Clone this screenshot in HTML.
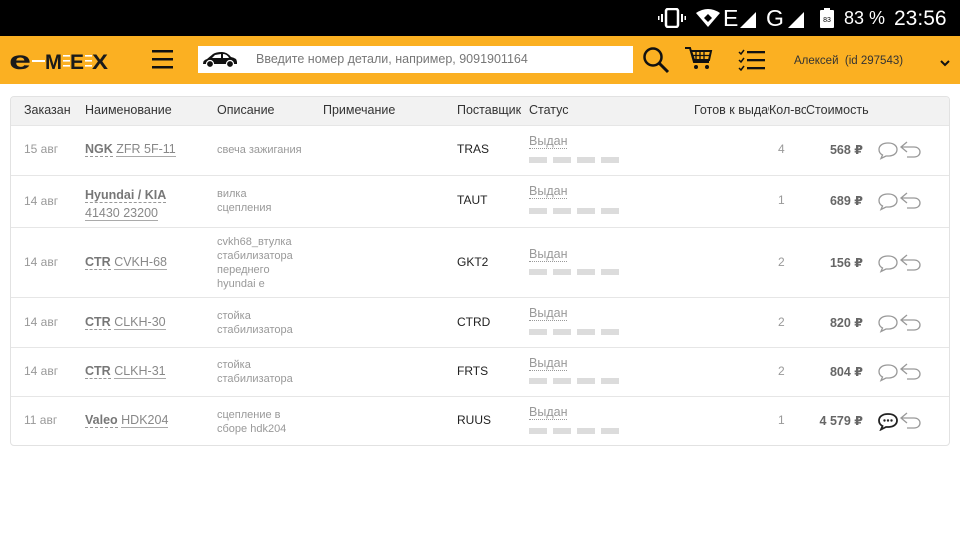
<!DOCTYPE html>
<html><head><meta charset="utf-8"><style>
*{margin:0;padding:0;box-sizing:border-box}
body{width:960px;height:540px;background:#fff;font-family:"Liberation Sans","DejaVu Sans",sans-serif;position:relative;overflow:hidden}
.a{position:absolute;white-space:nowrap}
.sb{top:0;left:0;width:960px;height:36px;background:#000;color:#fff}
.top{top:36px;left:0;width:960px;height:48px;background:#fbb022}
.tbl{top:96px;left:10px;width:940px;height:350px;border:1px solid #e2e2e2;border-radius:4px;overflow:hidden}
.hd{top:0;left:0;width:940px;height:29px;background:#f2f2f2}
.h{font-size:12.5px;color:#333;top:6px}
.row{left:0;width:940px;border-top:1px solid #e6e6e6}
.d{font-size:12px;color:#999;margin-top:-1px}
.nm{font-size:12.5px;color:#888;margin-top:-1px}
.nm b{color:#777;border-bottom:1px dashed #999}
.nm span{border-bottom:1px solid #aaa}
.ds{font-size:11px;color:#999;line-height:14px;margin-top:-1px}
.sp{font-size:12px;color:#222;margin-top:-1px}
.st{font-size:12.5px;color:#999;border-bottom:1px dotted #999;line-height:14px;margin-top:0px}
.dash{width:18px;height:6px;background:#dcdcdc}
.q{font-size:12px;color:#999;margin-top:-1px}
.pr{font-size:12.5px;color:#666;font-weight:bold;text-align:right;width:60px;margin-top:-1px}
</style></head><body>
<div class="a sb">
<svg class="a" style="left:658px;top:8px" width="30" height="20"><rect x="8" y="1" width="12" height="18" rx="2" fill="none" stroke="#fff" stroke-width="2.5"/><rect x="3" y="6" width="2" height="8" fill="#fff"/><rect x="23" y="6" width="2" height="8" fill="#fff"/><rect x="0" y="8" width="1.5" height="4" fill="#fff"/><rect x="26.5" y="8" width="1.5" height="4" fill="#fff"/></svg>
<svg class="a" style="left:695px;top:8px" width="26" height="20"><path d="M1 5 Q13 -3 25 5 L13 19Z" fill="#fff"/><path d="M13 6 L17 10 L13 14 L9 10Z" fill="#000"/></svg>
<div class="a" style="left:723px;top:5px;font-size:23px">E</div>
<svg class="a" style="left:740px;top:12px" width="16" height="16"><path d="M0 16 L16 0 L16 16Z" fill="#fff"/></svg>
<div class="a" style="left:766px;top:5px;font-size:23px">G</div>
<svg class="a" style="left:788px;top:12px" width="16" height="16"><path d="M0 16 L16 0 L16 16Z" fill="#fff"/></svg>
<svg class="a" style="left:820px;top:8px" width="14" height="20"><rect x="4" y="0" width="6" height="3" fill="#fff"/><rect x="0" y="2" width="14" height="18" rx="1" fill="#fff"/><text x="7" y="14" font-size="7" text-anchor="middle" fill="#000" font-family="Liberation Sans">83</text></svg>
<div class="a" style="left:844px;top:8px;font-size:18px">83 %</div>
<div class="a" style="left:894px;top:7px;font-size:21px">23:56</div>
</div>
<div class="a top">
<svg class="a" style="left:8px;top:12px" width="104" height="24">
<text x="1" y="21" font-family="Liberation Sans" font-weight="bold" font-size="26" fill="#1a1a1a" textLength="22" lengthAdjust="spacingAndGlyphs">e</text>
<rect x="24" y="12" width="13" height="2" fill="#fff"/>
<text x="37" y="21" font-family="Liberation Sans" font-weight="bold" font-size="21" fill="#1a1a1a" textLength="17" lengthAdjust="spacingAndGlyphs">M</text>
<rect x="55" y="7" width="7" height="1.6" fill="#fff"/><rect x="55" y="12" width="7" height="1.6" fill="#fff"/><rect x="55" y="17" width="7" height="1.6" fill="#fff"/>
<text x="62" y="21" font-family="Liberation Sans" font-weight="bold" font-size="21" fill="#1a1a1a" textLength="14" lengthAdjust="spacingAndGlyphs">E</text>
<rect x="77" y="7" width="7" height="1.6" fill="#fff"/><rect x="77" y="12" width="7" height="1.6" fill="#fff"/><rect x="77" y="17" width="7" height="1.6" fill="#fff"/>
<text x="84" y="21" font-family="Liberation Sans" font-weight="bold" font-size="21" fill="#1a1a1a" textLength="16" lengthAdjust="spacingAndGlyphs">X</text>
</svg>
<svg class="a" style="left:152px;top:14px" width="22" height="20"><rect y="0" width="21" height="2.5" fill="#111"/><rect y="8" width="21" height="2.5" fill="#111"/><rect y="16" width="21" height="2.5" fill="#111"/></svg>
<div class="a" style="left:198px;top:10px;width:435px;height:27px;background:#fff"></div>
<svg class="a" style="left:202px;top:15px" width="36" height="18"><path d="M1 13 Q1 9 5 8 L11 3 Q14 1 20 1 Q25 1 29 6 Q35 7 35 11 L35 13Z" fill="#111"/><circle cx="8" cy="13" r="3.5" fill="#111" stroke="#fff" stroke-width="1.2"/><circle cx="28" cy="13" r="3.5" fill="#111" stroke="#fff" stroke-width="1.2"/><path d="M13 4 L19 3 L19 7 L10 7Z M21 3 Q25 3 27 7 L21 7Z" fill="#fff"/></svg>
<div class="a" style="left:256px;top:16px;font-size:12.5px;color:#777">Введите номер детали, например, 9091901164</div>
<svg class="a" style="left:642px;top:10px" width="28" height="28"><circle cx="11" cy="11" r="8.5" fill="none" stroke="#111" stroke-width="2.5"/><path d="M17 17 L26 26" stroke="#111" stroke-width="3"/></svg>
<svg class="a" style="left:685px;top:10px" width="28" height="26"><path d="M0 2 L5 2 L9 16 L24 16" fill="none" stroke="#111" stroke-width="2"/><path d="M6 5 L26 5 L24 14 L9 14Z" fill="none" stroke="#111" stroke-width="2"/><path d="M11 6 V13 M15 6 V13 M19 6 V13 M7 9.5 H25" stroke="#111" stroke-width="1.3"/><circle cx="11" cy="21" r="2" fill="#111"/><circle cx="22" cy="21" r="2" fill="#111"/></svg>
<svg class="a" style="left:738px;top:13px" width="28" height="22"><path d="M1 3 L3 5 L6 1 M1 11 L3 13 L6 9 M1 19 L3 21 L6 17" fill="none" stroke="#111" stroke-width="1.5"/><rect x="9" y="2" width="18" height="2.3" fill="#111"/><rect x="9" y="10" width="18" height="2.3" fill="#111"/><rect x="9" y="18" width="18" height="2.3" fill="#111"/></svg>
<div class="a" style="left:794px;top:19px;font-size:11.5px;color:#333">Алексей &nbsp;(id 297543)</div>
<svg class="a" style="left:940px;top:24px" width="10" height="8"><path d="M1 1 L5 5 L9 1" fill="none" stroke="#111" stroke-width="2"/></svg>
</div>
<div class="a tbl">
<div class="a hd">
<div class="a h" style="left:13px">Заказан</div>
<div class="a h" style="left:74px">Наименование</div>
<div class="a h" style="left:206px">Описание</div>
<div class="a h" style="left:312px">Примечание</div>
<div class="a h" style="left:446px">Поставщик</div>
<div class="a h" style="left:518px">Статус</div>
<div class="a h" style="left:683px">Готов к выдаче</div>
<div class="a h" style="left:758px;background:#f2f2f2;padding-left:0">Кол-во</div>
<div class="a h" style="left:795px;background:#f2f2f2">Стоимость</div>
</div>
<div class="a row" style="top:28px;height:50px">
<div class="a d" style="left:13px;top:17px">15 авг</div>
<div class="a nm" style="left:74px;top:17px"><b>NGK</b> <span>ZFR 5F-11</span></div>
<div class="a ds" style="left:206px;top:18px">свеча зажигания</div>
<div class="a sp" style="left:446px;top:17px">TRAS</div>
<div class="a st" style="left:518px;top:8px">Выдан</div>
<div class="a dash" style="left:518px;top:31px"></div><div class="a dash" style="left:542px;top:31px"></div><div class="a dash" style="left:566px;top:31px"></div><div class="a dash" style="left:590px;top:31px"></div>
<div class="a q" style="left:767px;top:17px">4</div>
<div class="a pr" style="left:792px;top:17px">568 ₽</div>
<svg class="a" style="left:866px;top:14px" width="46" height="20"><path d="M11 3 C5 3 2 6 2 9.5 C2 12 3.5 14 5.5 15 L4 18.5 L9 16 C10 16 10.5 16 11 16 C17 16 20 13 20 9.5 C20 6 17 3 11 3Z" fill="none" stroke="#999" stroke-width="1.3"/><path d="M30 2 L24 7 L30 12 M24 7 H37 C41 7 43 9.5 43 12 C43 14.5 41 17 37 17 H30" fill="none" stroke="#999" stroke-width="1.3"/></svg>
</div>
<div class="a row" style="top:78px;height:52px">
<div class="a d" style="left:13px;top:19px">14 авг</div>
<div class="a nm" style="left:74px;top:11px;line-height:18px"><b style="border-bottom:1px dashed #999">Hyundai / KIA</b><br><span>41430 23200</span></div>
<div class="a ds" style="left:206px;top:12px">вилка<br>сцепления</div>
<div class="a sp" style="left:446px;top:18px">TAUT</div>
<div class="a st" style="left:518px;top:8px">Выдан</div>
<div class="a dash" style="left:518px;top:32px"></div><div class="a dash" style="left:542px;top:32px"></div><div class="a dash" style="left:566px;top:32px"></div><div class="a dash" style="left:590px;top:32px"></div>
<div class="a q" style="left:767px;top:18px">1</div>
<div class="a pr" style="left:792px;top:18px">689 ₽</div>
<svg class="a" style="left:866px;top:15px" width="46" height="20"><path d="M11 3 C5 3 2 6 2 9.5 C2 12 3.5 14 5.5 15 L4 18.5 L9 16 C10 16 10.5 16 11 16 C17 16 20 13 20 9.5 C20 6 17 3 11 3Z" fill="none" stroke="#999" stroke-width="1.3"/><path d="M30 2 L24 7 L30 12 M24 7 H37 C41 7 43 9.5 43 12 C43 14.5 41 17 37 17 H30" fill="none" stroke="#999" stroke-width="1.3"/></svg>
</div>
<div class="a row" style="top:130px;height:70px">
<div class="a d" style="left:13px;top:28px">14 авг</div>
<div class="a nm" style="left:74px;top:28px"><b>CTR</b> <span>CVKH-68</span></div>
<div class="a ds" style="left:206px;top:8px">cvkh68_втулка<br>стабилизатора<br>переднего<br>hyundai e</div>
<div class="a sp" style="left:446px;top:28px">GKT2</div>
<div class="a st" style="left:518px;top:19px">Выдан</div>
<div class="a dash" style="left:518px;top:41px"></div><div class="a dash" style="left:542px;top:41px"></div><div class="a dash" style="left:566px;top:41px"></div><div class="a dash" style="left:590px;top:41px"></div>
<div class="a q" style="left:767px;top:28px">2</div>
<div class="a pr" style="left:792px;top:28px">156 ₽</div>
<svg class="a" style="left:866px;top:25px" width="46" height="20"><path d="M11 3 C5 3 2 6 2 9.5 C2 12 3.5 14 5.5 15 L4 18.5 L9 16 C10 16 10.5 16 11 16 C17 16 20 13 20 9.5 C20 6 17 3 11 3Z" fill="none" stroke="#999" stroke-width="1.3"/><path d="M30 2 L24 7 L30 12 M24 7 H37 C41 7 43 9.5 43 12 C43 14.5 41 17 37 17 H30" fill="none" stroke="#999" stroke-width="1.3"/></svg>
</div>
<div class="a row" style="top:200px;height:50px">
<div class="a d" style="left:13px;top:18px">14 авг</div>
<div class="a nm" style="left:74px;top:18px"><b>CTR</b> <span>CLKH-30</span></div>
<div class="a ds" style="left:206px;top:12px">стойка<br>стабилизатора</div>
<div class="a sp" style="left:446px;top:18px">CTRD</div>
<div class="a st" style="left:518px;top:8px">Выдан</div>
<div class="a dash" style="left:518px;top:31px"></div><div class="a dash" style="left:542px;top:31px"></div><div class="a dash" style="left:566px;top:31px"></div><div class="a dash" style="left:590px;top:31px"></div>
<div class="a q" style="left:767px;top:18px">2</div>
<div class="a pr" style="left:792px;top:18px">820 ₽</div>
<svg class="a" style="left:866px;top:15px" width="46" height="20"><path d="M11 3 C5 3 2 6 2 9.5 C2 12 3.5 14 5.5 15 L4 18.5 L9 16 C10 16 10.5 16 11 16 C17 16 20 13 20 9.5 C20 6 17 3 11 3Z" fill="none" stroke="#999" stroke-width="1.3"/><path d="M30 2 L24 7 L30 12 M24 7 H37 C41 7 43 9.5 43 12 C43 14.5 41 17 37 17 H30" fill="none" stroke="#999" stroke-width="1.3"/></svg>
</div>
<div class="a row" style="top:250px;height:49px">
<div class="a d" style="left:13px;top:17px">14 авг</div>
<div class="a nm" style="left:74px;top:17px"><b>CTR</b> <span>CLKH-31</span></div>
<div class="a ds" style="left:206px;top:11px">стойка<br>стабилизатора</div>
<div class="a sp" style="left:446px;top:17px">FRTS</div>
<div class="a st" style="left:518px;top:8px">Выдан</div>
<div class="a dash" style="left:518px;top:30px"></div><div class="a dash" style="left:542px;top:30px"></div><div class="a dash" style="left:566px;top:30px"></div><div class="a dash" style="left:590px;top:30px"></div>
<div class="a q" style="left:767px;top:17px">2</div>
<div class="a pr" style="left:792px;top:17px">804 ₽</div>
<svg class="a" style="left:866px;top:14px" width="46" height="20"><path d="M11 3 C5 3 2 6 2 9.5 C2 12 3.5 14 5.5 15 L4 18.5 L9 16 C10 16 10.5 16 11 16 C17 16 20 13 20 9.5 C20 6 17 3 11 3Z" fill="none" stroke="#999" stroke-width="1.3"/><path d="M30 2 L24 7 L30 12 M24 7 H37 C41 7 43 9.5 43 12 C43 14.5 41 17 37 17 H30" fill="none" stroke="#999" stroke-width="1.3"/></svg>
</div>
<div class="a row" style="top:299px;height:51px">
<div class="a d" style="left:13px;top:17px">11 авг</div>
<div class="a nm" style="left:74px;top:17px"><b>Valeo</b> <span>HDK204</span></div>
<div class="a ds" style="left:206px;top:12px">сцепление в<br>сборе hdk204</div>
<div class="a sp" style="left:446px;top:17px">RUUS</div>
<div class="a st" style="left:518px;top:8px">Выдан</div>
<div class="a dash" style="left:518px;top:31px"></div><div class="a dash" style="left:542px;top:31px"></div><div class="a dash" style="left:566px;top:31px"></div><div class="a dash" style="left:590px;top:31px"></div>
<div class="a q" style="left:767px;top:17px">1</div>
<div class="a pr" style="left:792px;top:17px">4 579 ₽</div>
<svg class="a" style="left:866px;top:14px" width="46" height="20"><path d="M11 3 C5 3 2 6 2 9.5 C2 12 3.5 14 5.5 15 L4 18.5 L9 16 C10 16 10.5 16 11 16 C17 16 20 13 20 9.5 C20 6 17 3 11 3Z" fill="none" stroke="#222" stroke-width="1.8"/><circle cx="7.5" cy="9.5" r="1.2" fill="#222"/><circle cx="11" cy="9.5" r="1.2" fill="#222"/><circle cx="14.5" cy="9.5" r="1.2" fill="#222"/><path d="M30 2 L24 7 L30 12 M24 7 H37 C41 7 43 9.5 43 12 C43 14.5 41 17 37 17 H30" fill="none" stroke="#999" stroke-width="1.3"/></svg>
</div>
</div>
</body></html>
